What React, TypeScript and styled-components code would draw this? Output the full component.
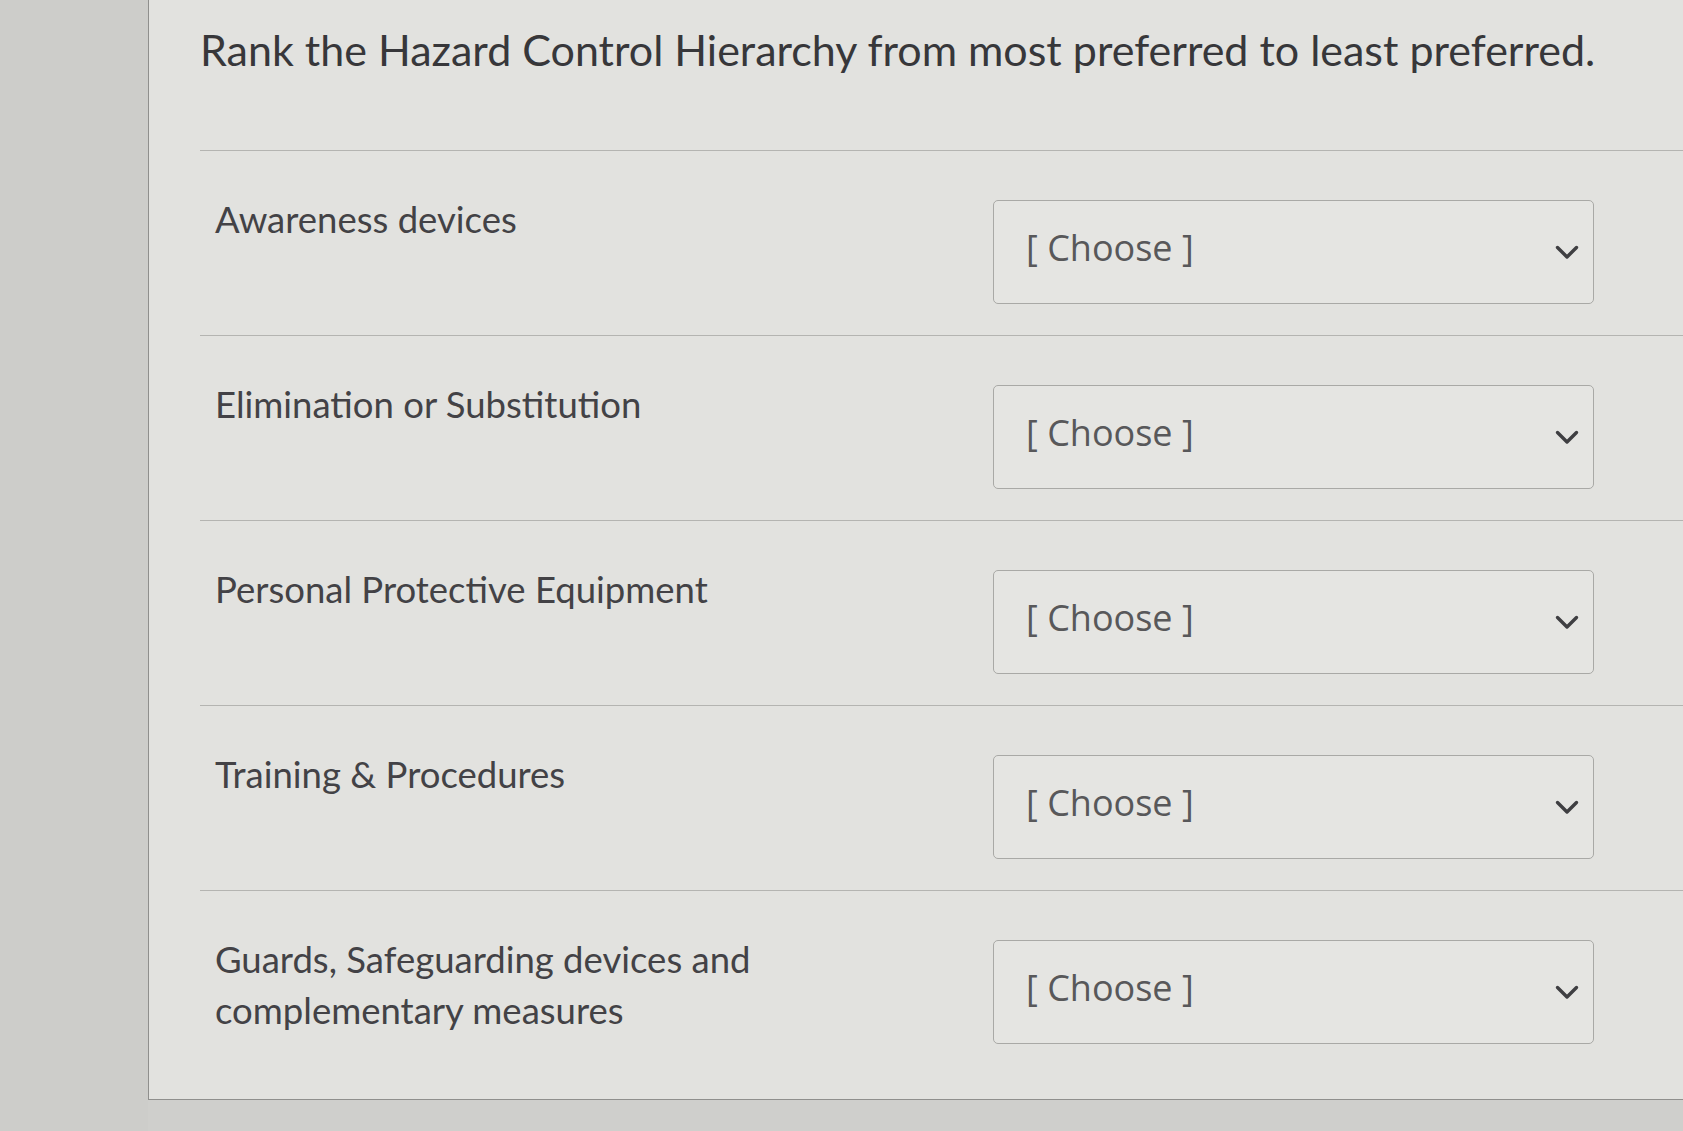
import styled, { createGlobalStyle } from "styled-components";

// == STYLES START ==
const GlobalStyle = createGlobalStyle`
  html, body {
    margin: 0;
    padding: 0;
    background: #cfcfcc;
  }
  body {
    font-family: Lato, "Noto Sans", sans-serif;
  }
`;

const Page = styled.div`
  display: flex;
  min-height: 1131px;
`;

const Gutter = styled.div`
  width: 148px;
  flex-shrink: 0;
  background: #cdcdca;
`;

const Panel = styled.main`
  flex: 1;
  align-self: flex-start;
  height: 1100px;
  box-sizing: border-box;
  background: #e2e2df;
  border-left: 1px solid #8f8f8d;
  border-bottom: 1px solid #8f8f8d;
  padding-left: 51px;
`;

const Title = styled.h1`
  margin: 23px 0 74px;
  font-family: Lato, sans-serif;
  font-weight: 400;
  font-size: 43px;
  line-height: 53px;
  color: #37373a;
  white-space: nowrap;
`;

const Row = styled.div`
  display: grid;
  grid-template-columns: 778px 601px;
  border-top: 1px solid #b4b4b1;
  padding: 0 0 31px 15px;
`;

const Label = styled.div`
  padding-top: 43px;
  max-width: 570px;
  font-size: 36.5px;
  line-height: 51px;
  color: #434246;
`;

const SelectBox = styled.div`
  margin-top: 49px;
  height: 104px;
  box-sizing: border-box;
  display: flex;
  align-items: center;
  justify-content: space-between;
  padding: 0 13px 9px 32px;
  background: #e5e5e2;
  border: 1px solid #a9a9a6;
  border-radius: 5px;
  font-family: "Open Sans", sans-serif;
  font-size: 36px;
  color: #58585a;
`;

const Chevron = styled.svg`
  width: 26px;
  height: 17px;
  margin-top: 9px;
  flex-shrink: 0;
`;
// == STYLES END ==

const items = [
  "Awareness devices",
  "Elimination or Substitution",
  "Personal Protective Equipment",
  "Training & Procedures",
  "Guards, Safeguarding devices and complementary measures",
];

const Select = () => (
  <SelectBox>
    <span>[ Choose ]</span>
    <Chevron viewBox="0 0 26 17">
      <path d="M3.5 3.5 L13 13 L22.5 3.5" fill="none" stroke="#3f3f42" strokeWidth="3.4" strokeLinecap="round" strokeLinejoin="round" />
    </Chevron>
  </SelectBox>
);

export default function App() {
  return (
    <>
      <GlobalStyle />
      <Page>
        <Gutter />
        <Panel>
          <Title>Rank the Hazard Control Hierarchy from most preferred to least preferred.</Title>
          {items.map((item) => (
            <Row key={item}>
              <Label>{item}</Label>
              <Select />
            </Row>
          ))}
        </Panel>
      </Page>
    </>
  );
}
